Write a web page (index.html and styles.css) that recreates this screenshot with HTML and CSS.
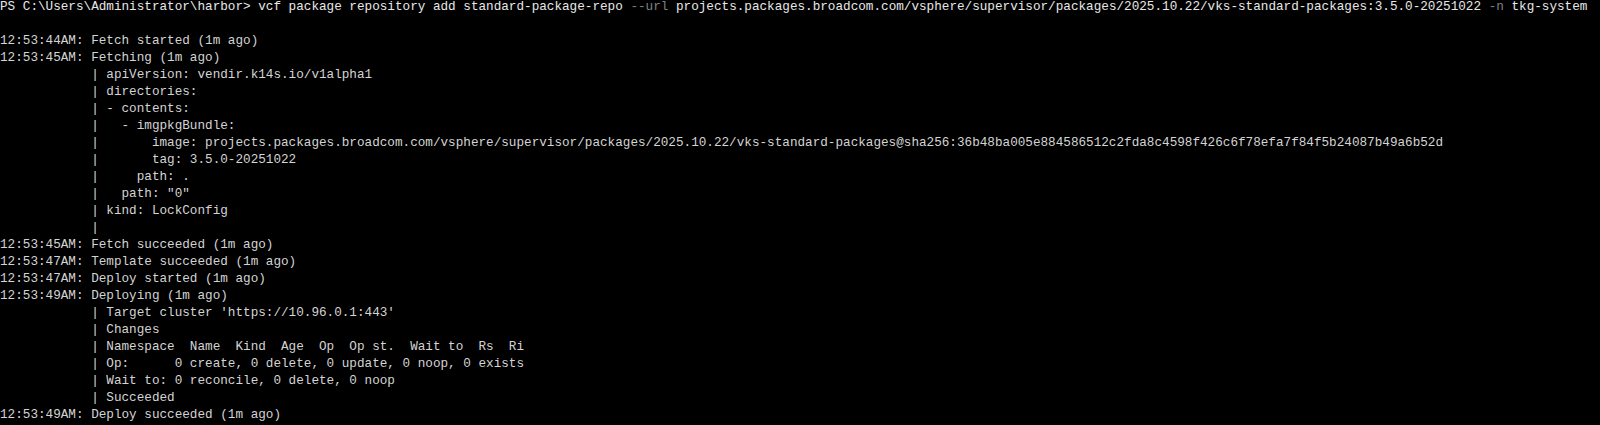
FILE: index.html
```html
<!DOCTYPE html>
<html>
<head>
<meta charset="utf-8">
<link rel="stylesheet" href="styles.css">
</head>
<body>
<pre class="term"><span class="cmd">PS C:\Users\Administrator\harbor&gt; vcf package repository add standard-package-repo <span class="param">--url</span> projects.packages.broadcom.com/vsphere/supervisor/packages/2025.10.22/vks-standard-packages:3.5.0-20251022 <span class="param">-n</span> tkg-system</span>

12:53:44AM: Fetch started (1m ago)
12:53:45AM: Fetching (1m ago)
            | apiVersion: vendir.k14s.io/v1alpha1
            | directories:
            | - contents:
            |   - imgpkgBundle:
            |       image: projects.packages.broadcom.com/vsphere/supervisor/packages/2025.10.22/vks-standard-packages@sha256:36b48ba005e884586512c2fda8c4598f426c6f78efa7f84f5b24087b49a6b52d
            |       tag: 3.5.0-20251022
            |     path: .
            |   path: "0"
            | kind: LockConfig
            |
12:53:45AM: Fetch succeeded (1m ago)
12:53:47AM: Template succeeded (1m ago)
12:53:47AM: Deploy started (1m ago)
12:53:49AM: Deploying (1m ago)
            | Target cluster 'https://10.96.0.1:443'
            | Changes
            | Namespace  Name  Kind  Age  Op  Op st.  Wait to  Rs  Ri
            | Op:      0 create, 0 delete, 0 update, 0 noop, 0 exists
            | Wait to: 0 reconcile, 0 delete, 0 noop
            | Succeeded
12:53:49AM: Deploy succeeded (1m ago)
12:53:49AM: Succeeded (1m ago)
</pre>
</body>
</html>
```
FILE: styles.css
```css
html, body {
  margin: 0;
  padding: 0;
  background: #000000;
  height: 100%;
  overflow: hidden;
}
.term {
  margin: -2px 0 0 0;
  padding: 0;
  font-family: "Liberation Mono", "DejaVu Sans Mono", monospace;
  font-size: 12.67px;
  line-height: 17px;
  color: #d4d4d4;
  white-space: pre;
}
.cmd {
  color: #e8e8e8;
}
.param {
  color: #808080;
}
```
